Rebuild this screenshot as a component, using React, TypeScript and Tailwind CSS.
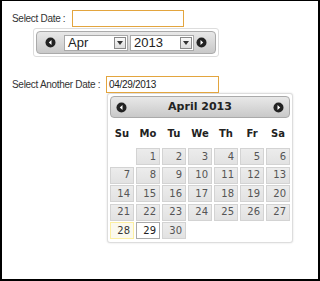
import React from "react";

const days = ["Su", "Mo", "Tu", "We", "Th", "Fr", "Sa"];

function CircleArrow({ dir }: { dir: "left" | "right" }) {
  return (
    <svg width="11" height="11" viewBox="0 0 11 11">
      <circle cx="5.5" cy="5.5" r="5" fill="#222" />
      {dir === "left" ? (
        <polygon points="6.5,3 6.5,8 3.8,5.5" fill="#fff" />
      ) : (
        <polygon points="4.5,3 4.5,8 7.2,5.5" fill="#fff" />
      )}
    </svg>
  );
}

function FakeSelect({ value, className }: { value: string; className: string }) {
  return (
    <div
      className={`flex h-[16px] items-center justify-between border border-[#a9a9a9] bg-white pl-[3px] ${className}`}
    >
      <span className="text-[13px] leading-none text-[#222]">{value}</span>
      <span className="mr-[1px] flex h-[12px] w-[12px] items-center justify-center border border-[#8a8a8a] bg-gradient-to-b from-[#fafafa] to-[#dcdcdc]">
        <svg width="6" height="4" viewBox="0 0 6 4">
          <polygon points="0,0 6,0 3,4" fill="#333" />
        </svg>
      </span>
    </div>
  );
}

export default function App() {
  const cells: (number | null)[] = [null, ...Array.from({ length: 30 }, (_, i) => i + 1)];

  return (
    <div
      className="h-[281px] w-[320px] border-x-2 border-t border-b-2 border-black bg-white pt-[9px] text-[10px] tracking-[-0.3px] text-[#333]"
      style={{ fontFamily: '"Liberation Sans", Arial, sans-serif' }}
    >
      <div className="ml-[10px] flex items-center">
        <span className="w-[60px] shrink-0 whitespace-nowrap leading-none">Select Date :</span>
        <div className="h-[17px] w-[112px] shrink-0 border border-[#e3a53e] bg-white" />
      </div>

      <div className="ml-[31px] mt-[1px] w-[186px] rounded-[3px] border border-[#dddddd] bg-white p-[2px] tracking-normal">
        <div className="flex h-[23px] items-center rounded-[4px] border border-[#aaaaaa] bg-gradient-to-b from-[#e8e8e8] to-[#c9c9c9] px-[8px]">
          <CircleArrow dir="left" />
          <FakeSelect value="Apr" className="ml-[8px] w-[64px]" />
          <FakeSelect value="2013" className="ml-[2px] w-[64px]" />
          <span className="ml-auto">
            <CircleArrow dir="right" />
          </span>
        </div>
      </div>

      <div className="ml-[10px] mt-[19px] flex items-center">
        <span className="w-[94px] shrink-0 whitespace-nowrap leading-none">Select Another Date :</span>
        <div className="flex h-[17px] w-[113px] shrink-0 items-center border border-[#e3a53e] bg-white pl-[2px] leading-none text-[#222]">
          04/29/2013
        </div>
      </div>

      <div
        className="ml-[105px] w-[186px] rounded-[3px] border border-[#dddddd] bg-white p-[2px] pb-[3px] tracking-normal shadow-[0_0_2px_rgba(0,0,0,0.15)]"
        style={{ fontFamily: '"DejaVu Sans", Verdana, sans-serif' }}
      >
        <div className="flex h-[22px] items-center rounded-[4px] border border-[#aaaaaa] bg-gradient-to-b from-[#e8e8e8] to-[#c9c9c9] px-[5px]">
          <CircleArrow dir="left" />
          <span className="flex-1 text-center text-[11px] font-bold text-[#222]">April 2013</span>
          <CircleArrow dir="right" />
        </div>

        <div className="mt-[4px] grid grid-cols-[repeat(7,24px)] gap-x-[2px]">
          {days.map((d) => (
            <div key={d} className="flex h-[23px] items-center justify-center text-[10px] font-bold text-[#222]">
              {d}
            </div>
          ))}
        </div>

        <div className="mt-[3px] grid grid-cols-[repeat(7,24px)] gap-x-[2px] gap-y-[1.5px]">
          {cells.map((n, i) => {
            if (n === null) return <div key={i} />;
            let cls =
              "border-[#d3d3d3] bg-gradient-to-b from-[#ececec] to-[#e2e2e2] text-[#555]";
            if (n === 28) cls = "border-[#fcefa1] bg-[#fbf9ee] text-[#363636]";
            if (n === 29) cls = "border-[#aaaaaa] bg-white text-[#212121]";
            return (
              <div
                key={i}
                className={`flex h-[17px] items-center justify-end border pr-[3px] text-[10px] leading-none ${cls}`}
              >
                {n}
              </div>
            );
          })}
        </div>
      </div>
    </div>
  );
}
